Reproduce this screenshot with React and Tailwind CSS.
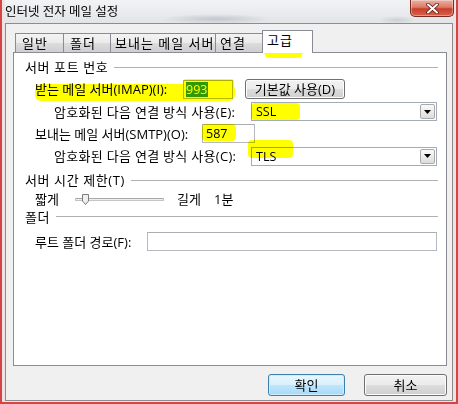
import React from "react";

// Yellow marker strokes that sit on top of the dialog (multiply blend keeps the text visible).
function Mark({ className }) {
  return (
    <div
      className={
        "pointer-events-none absolute bg-[#ffff00] mix-blend-multiply blur-[0.6px] " +
        className
      }
    />
  );
}

function CloseButton() {
  return (
    <div className="-mr-px flex h-[17px] w-[44px] items-center justify-center rounded-b-[5px] border border-t-0 border-[#7a2b22] bg-[linear-gradient(#eab0a2_0%,#de7a66_45%,#c7402c_55%,#d8614a_100%)] shadow-[inset_0_0_0_1px_rgba(255,255,255,0.35)]">
      <svg width="13" height="11" viewBox="0 0 13 11">
        <path d="M2 1.5l9 8M11 1.5l-9 8" stroke="#5a1a12" strokeWidth="3.6" strokeLinecap="round" />
        <path d="M2 1.5l9 8M11 1.5l-9 8" stroke="#ffffff" strokeWidth="2" strokeLinecap="round" />
      </svg>
    </div>
  );
}

function GroupHeader({ label, className }) {
  return (
    <div className={"flex items-center " + className}>
      <span className="text-[13px] leading-[16px] tracking-[0.6px]">{label}</span>
      <div className="ml-[6px] flex-1 border-t border-[#b0b0b0]" />
    </div>
  );
}

function Combo({ value }) {
  return (
    <div className="mr-px flex h-[19px] flex-1 items-center border border-[#a5acb5] bg-white pl-[4px] pr-px">
      <span className="flex-1 text-[12.5px] leading-[15px]">{value}</span>
      <div className="flex h-[15px] w-[15px] items-center justify-center rounded-[2px] border border-[#a9a9a9] bg-[linear-gradient(#fafafa,#dcdcdc)]">
        <svg width="7" height="4" viewBox="0 0 7 4">
          <path d="M0 0h7L3.5 4z" fill="#000" />
        </svg>
      </div>
    </div>
  );
}

function Field({ className, children }) {
  return (
    <div
      className={
        "flex h-[19px] items-center border border-[#b6b9c0] border-t-[#abadb3] bg-white pl-[2px] text-[12.5px] leading-[15px] " +
        className
      }
    >
      {children}
    </div>
  );
}

const tabFace =
  "flex h-[19px] items-center border border-b-0 border-[#898c95] bg-[linear-gradient(#f3f3f3,#ebebeb_50%,#dddddd_50%,#cfcfcf)] tracking-[1px]";

export default function App() {
  return (
    <div className="relative h-[404px] w-[458px] overflow-hidden bg-[#d64545] px-[2px] pb-[2px] font-['Open_Sans','Noto_Sans_CJK_KR',sans-serif] text-black">
      <div className="flex h-full flex-col bg-[#efe2e3] px-[3px] pb-px">
        {/* title bar */}
        <div className="flex h-[23px] items-start justify-between bg-[radial-gradient(ellipse_55px_5px_at_211px_19px,#c3c7cc,transparent),radial-gradient(ellipse_18px_4px_at_392px_20px,#ccd0d4,transparent),linear-gradient(#f2f3f5,#e2e4e7)]">
          <span className="mt-[4px] text-[12.5px] leading-[15px]">인터넷 전자 메일 설정</span>
          <CloseButton />
        </div>

        {/* dialog body */}
        <div className="flex flex-1 flex-col border border-[#8d8d8d] bg-[#f0f0f0] pl-[7px] pr-[5px] pt-[7px]">
          {/* tabs */}
          <div className="ml-[2px] flex h-[21px] items-end text-[13px] leading-[15px]">
            <div className={tabFace + " w-[49px] pl-[6px]"}>일반</div>
            <div className={tabFace + " -ml-px w-[48px] pl-[6px]"}>폴더</div>
            <div className={tabFace + " -ml-px w-[106px] pl-[4px]"}>보내는 메일 서버</div>
            <div className={tabFace + " -ml-px w-[48px] pl-[4px]"}>연결</div>
            <div className="relative z-10 -mb-px -ml-px flex h-[23px] w-[51px] items-start border border-b-0 border-[#898c95] bg-white pl-[4px] pt-[2px] tracking-[1px]">
              고급
            </div>
          </div>

          {/* tab page */}
          <div className="flex h-[314px] flex-col border border-[#898c95] bg-white pl-[11px] pr-[8px] pt-[5px]">
            <GroupHeader label="서버 포트 번호" className="h-[18px]" />

            <div className="mt-[3px] flex h-[20px] items-center pl-[10px] text-[13px] leading-[16px]">
              <span className="w-[148px]">받는 메일 서버(IMAP)(I):</span>
              <Field className="w-[50px]">
                <span className="bg-[#3399ff] pr-px text-white">993</span>
              </Field>
              <button className="ml-[12px] flex h-[20px] w-[100px] items-center justify-center rounded-[3px] border border-[#707070] bg-[linear-gradient(#f2f2f2,#ebebeb_50%,#dddddd_50%,#cfcfcf)] shadow-[inset_0_0_0_1px_#fcfcfc] text-[13px] leading-[15px]">
                기본값 사용(D)
              </button>
            </div>

            <div className="mt-[3px] flex h-[19px] items-center pl-[29px] text-[13px] leading-[16px]">
              <span className="w-[197px] tracking-[0.3px]">암호화된 다음 연결 방식 사용(E):</span>
              <Combo value="SSL" />
            </div>

            <div className="mt-[3px] flex h-[19px] items-center pl-[10px] text-[13px] leading-[16px]">
              <span className="w-[167px]">보내는 메일 서버(SMTP)(O):</span>
              <Field className="w-[53px] pl-[3px]">587</Field>
            </div>

            <div className="mt-[3px] flex h-[20px] items-center pl-[29px] text-[13px] leading-[16px]">
              <span className="w-[197px] tracking-[0.3px]">암호화된 다음 연결 방식 사용(C):</span>
              <Combo value="TLS" />
            </div>

            <GroupHeader label="서버 시간 제한(T)" className="mt-[5px] h-[18px]" />

            <div className="mt-px flex h-[18px] items-center pl-[10px] text-[13px] leading-[16px]">
              <span className="w-[40px]">짧게</span>
              <div className="relative flex h-[12px] w-[89px] items-center">
                <div className="h-[3px] w-full rounded-[1px] border border-[#c4c4c4] border-t-[#a8a8a8] bg-[#eeeeee]" />
                <svg className="absolute left-[7px] top-[1px]" width="7" height="11" viewBox="0 0 7 11">
                  <path d="M0.5 0.5h6v6.5l-3 3.5l-3-3.5z" fill="#eef0f2" stroke="#7c7c7c" />
                </svg>
              </div>
              <span className="ml-[13px] w-[37px]">길게</span>
              <span>1분</span>
            </div>

            <GroupHeader label="폴더" className="h-[17px]" />

            <div className="mt-[7px] flex h-[19px] items-center pl-[10px] text-[13px] leading-[16px]">
              <span className="w-[112px]">루트 폴더 경로(F):</span>
              <Field className="mr-px flex-1" />
            </div>
          </div>

          {/* dialog buttons */}
          <div className="mt-[8px] flex justify-end text-[13px] leading-[15px]">
            <button className="flex h-[22px] w-[77px] items-center justify-center rounded-[3px] border border-[#3c7fb1] bg-[linear-gradient(#eaf6fd,#d9f0fc_50%,#bee6fd_50%,#a7d9f5)] shadow-[inset_0_0_0_1px_#d3ecfb]">
              확인
            </button>
            <button className="ml-[19px] flex h-[22px] w-[83px] items-center justify-center rounded-[3px] border border-[#707070] bg-[linear-gradient(#f2f2f2,#ebebeb_50%,#dddddd_50%,#cfcfcf)] shadow-[inset_0_0_0_1px_#fcfcfc]">
              취소
            </button>
          </div>
        </div>
      </div>

      <Mark className="left-[264px] top-[34px] h-[24px] w-[39px] rounded-[6px]" />
      <Mark className="left-[35px] top-[84px] h-[17px] w-[200px] rounded-[6px]" />
      <Mark className="left-[183px] top-[79px] h-[19px] w-[51px] rounded-[3px]" />
      <Mark className="left-[251px] top-[103px] h-[17px] w-[49px] rounded-[4px]" />
      <Mark className="left-[202px] top-[124px] h-[17px] w-[34px] rounded-[4px]" />
      <Mark className="left-[248px] top-[140px] h-[18px] w-[45px] rounded-[4px]" />
    </div>
  );
}
